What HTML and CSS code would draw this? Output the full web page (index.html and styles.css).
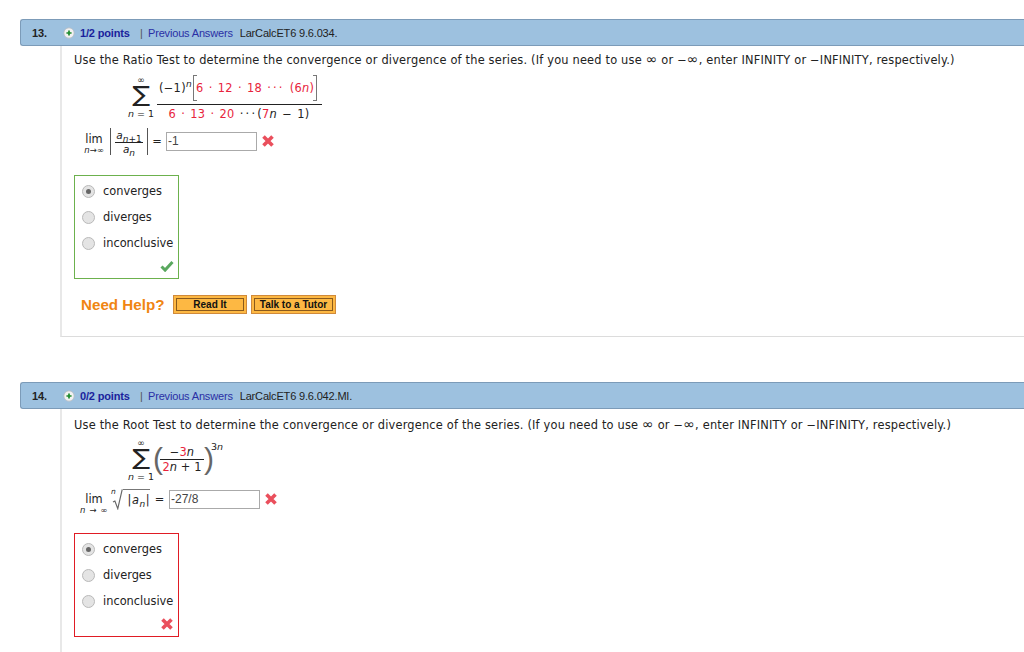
FILE: index.html
```html
<!DOCTYPE html>
<html lang="en">
<head>
<meta charset="utf-8">
<title>Series tests</title>
<link rel="stylesheet" href="styles.css">
</head>
<body>
<section class="question q13">
  <header class="bar">
    <span class="num">13.</span>
    <svg class="plus" viewBox="0 0 14 14"><circle cx="7" cy="7" r="6" fill="#f2f2f2" stroke="#b5bcc4"/><path d="M7 4v6M4 7h6" stroke="#1d8a2c" stroke-width="2"/></svg>
    <b class="pts">1/2 points</b>
    <span class="sep">|</span>
    <span class="prev">Previous Answers</span>
    <span class="code">LarCalcET6 9.6.034.</span>
  </header>
  <div class="content">
    <p class="prompt">Use the Ratio Test to determine the convergence or divergence of the series. (If you need to use <span class="sym">∞</span> or −<span class="sym">∞</span>, enter INFINITY or −INFINITY, respectively.)</p>
    <div class="series s1">
      <div class="sum"><span class="inf">∞</span><span class="sigma">∑</span><span class="idx"><i>n</i> = 1</span></div>
      <div class="frac f1">
        <div class="top"><span class="pow">(−1)<sup><i>n</i></sup></span><span class="brk"><span class="red">6 · 12 · 18 <span class="dots">···</span> (6<i>n</i>)</span></span></div>
        <div class="bot"><span class="red">6 · 13 · 20</span> <span class="dots">···</span>(<span class="red">7</span><i>n</i> − 1)</div>
      </div>
    </div>
    <div class="limit l1">
      <div class="lim"><span>lim</span><small><i>n</i>→∞</small></div>
      <div class="abs"><div class="mini"><span class="over"><i>a</i><sub><i>n</i>+1</sub></span><span class="under"><i>a</i><sub><i>n</i></sub></span></div></div>
      <span class="eq">=</span>
      <input class="answer" value="-1" aria-label="limit">
      <svg class="cross" viewBox="0 0 14 14"><path d="M2.500 2.500l9 9M11.500 2.500l-9 9" stroke="#ea4f5c" stroke-width="3.6"/></svg>
    </div>
    <div class="choices good">
      <label class="opt"><span class="radio on"></span>converges</label>
      <label class="opt"><span class="radio"></span>diverges</label>
      <label class="opt"><span class="radio"></span>inconclusive</label>
      <svg class="mark check" viewBox="0 0 14 11"><path d="M1.500 5.500l3.600 3.600 7.400-8" fill="none" stroke="#5aa85f" stroke-width="3"/></svg>
    </div>
    <div class="help">
      <span class="need">Need Help?</span>
      <span class="btn read"><span>Read It</span></span>
      <span class="btn tutor"><span>Talk to a Tutor</span></span>
    </div>
  </div>
</section>
<section class="question q14">
  <header class="bar">
    <span class="num">14.</span>
    <svg class="plus" viewBox="0 0 14 14"><circle cx="7" cy="7" r="6" fill="#f2f2f2" stroke="#b5bcc4"/><path d="M7 4v6M4 7h6" stroke="#1d8a2c" stroke-width="2"/></svg>
    <b class="pts">0/2 points</b>
    <span class="sep">|</span>
    <span class="prev">Previous Answers</span>
    <span class="code">LarCalcET6 9.6.042.MI.</span>
  </header>
  <div class="content">
    <p class="prompt">Use the Root Test to determine the convergence or divergence of the series. (If you need to use <span class="sym">∞</span> or −<span class="sym">∞</span>, enter INFINITY or −INFINITY, respectively.)</p>
    <div class="series s2">
      <div class="sum"><span class="inf">∞</span><span class="sigma">∑</span><span class="idx"><i>n</i> = 1</span></div>
      <span class="paren">(</span>
      <div class="frac f2">
        <div class="top">−<span class="red">3</span><i>n</i></div>
        <div class="bot"><span class="red">2</span><i>n</i> + 1</div>
      </div>
      <span class="paren">)</span>
      <span class="power">3<i>n</i></span>
    </div>
    <div class="limit l2">
      <div class="lim"><span>lim</span><small><i>n</i> → ∞</small></div>
      <div class="root">
        <span class="rootn"><i>n</i></span>
        <svg class="radical" viewBox="0 0 11 21"><path d="M1 13l2-1 3 8L10.500 .5h.5" fill="none" stroke="#666" stroke-width="1.2"/></svg>
        <span class="radicand">|<i>a</i><sub><i>n</i></sub>|</span>
      </div>
      <span class="eq">=</span>
      <input class="answer" value="-27/8" aria-label="limit">
      <svg class="cross" viewBox="0 0 14 14"><path d="M2.500 2.500l9 9M11.500 2.500l-9 9" stroke="#ea4f5c" stroke-width="3.6"/></svg>
    </div>
    <div class="choices bad">
      <label class="opt"><span class="radio on"></span>converges</label>
      <label class="opt"><span class="radio"></span>diverges</label>
      <label class="opt"><span class="radio"></span>inconclusive</label>
      <svg class="mark" viewBox="0 0 14 14"><path d="M2.500 2.500l9 9M11.500 2.500l-9 9" stroke="#ea4f5c" stroke-width="3.6"/></svg>
    </div>
  </div>
</section>
</body>
</html>
```
FILE: styles.css
```css
* { box-sizing: border-box; }
html, body { margin: 0; padding: 0; background: #fff; overflow: hidden; }
body { height: 652px; padding-top: 19px; font-family: "DejaVu Sans", Verdana, sans-serif; font-size: 11.4px; color: #222; }
.question { margin-left: 20px; }
.q14 { margin-top: 45px; }
.bar { height: 27px; display: flex; align-items: center; background: #9dc1df; border: 1px solid #7c9bb8; border-right: 0; border-radius: 3px 0 0 3px; font-family: "Liberation Sans", Arial, sans-serif; font-size: 11px; letter-spacing: -.17px; color: #222; padding-left: 11px; }
.num { font-weight: bold; width: 31px; }
.plus { width: 12px; height: 12px; margin-right: 5px; }
.pts { color: #1a1f9c; width: 60px; }
.sep { color: #555; width: 8px; }
.prev { color: #2a2fa5; margin-right: 7px; }
.content { margin-left: 40px; border-left: 2px solid #e8e8e8; padding-left: 12px; }
.q13 .content { height: 291px; border-bottom: 1px solid #dcdcdc; }
.q14 .content { height: 244px; }
.prompt { margin: 0; padding-top: 6px; line-height: 16px; white-space: nowrap; letter-spacing: .183px; }
.q14 .prompt { padding-top: 8px; }
.sym { font-size: 14px; line-height: 0; }
i { font-style: italic; }
.red { color: #e8243c; }
.series { display: flex; align-items: flex-start; margin: 3px 0 0 55px; }
.s1 { height: 55px; }
.s2 { height: 48px; }
.sum { width: 24px; display: flex; flex-direction: column; align-items: center; font-size: 9.5px; }
.s1 .sum { padding-top: 5px; }
.s2 .sum { padding-top: 3px; }
.inf { font-size: 9px; line-height: 8px; }
.sigma { font-size: 22px; line-height: 21px; transform: scaleX(1.2); }
.idx { line-height: 11px; margin-top: 3px; white-space: nowrap; }
.frac { display: flex; flex-direction: column; align-items: center; white-space: nowrap; letter-spacing: .3px; }
.f1 { margin-left: 4px; width: 165px; }
.f1 .top { height: 34px; padding: 4px 0 3px 2px; border-bottom: 1px solid #222; width: 100%; display: flex; align-items: center; }
.f1 .bot { line-height: 18px; word-spacing: 1.2px; margin-left: -1px; }
.dots { letter-spacing: 2.2px; }
.pow { width: 34px; }
.brk { position: relative; display: flex; align-items: center; height: 26px; width: 124px; padding-left: 3px; word-spacing: 1.2px; }
.brk::before, .brk::after { content: ""; position: absolute; top: 0; bottom: 0; width: 3px; border: 1px solid #777; }
.brk::before { left: 0; border-right: 0; }
.brk::after { right: 0; border-left: 0; }
sup { font-size: 9px; line-height: 0; }
sub { font-size: 9px; line-height: 0; }
.paren { width: 7px; font-family: "Liberation Sans", Arial, sans-serif; font-size: 30px; line-height: 34px; color: #666; margin-top: 6px; }
.f2 { margin: 9px 0 0; width: 44px; letter-spacing: .1px; }
.f2 .top { line-height: 14px; border-bottom: 1px solid #222; width: 100%; text-align: center; height: 15px; }
.f2 .bot { line-height: 15px; }
.power { font-size: 9.5px; line-height: 12px; margin-top: 5px; }
.limit { display: flex; align-items: center; height: 30px; }
.l1 { margin-left: 7px; }
.l2 { margin-left: 3px; }
.lim { display: flex; flex-direction: column; align-items: center; line-height: 12px; width: 26px; }
.l1 .lim { margin-top: 6px; }
.l2 .lim { width: 34px; margin-top: 9px; }
.l2 .lim small { letter-spacing: .6px; }
.lim small { font-size: 8.5px; white-space: nowrap; line-height: 10px; }
.abs { margin-left: 3px; border: 1px solid #555; border-width: 0 1px; height: 27px; width: 38px; }
.mini { display: flex; flex-direction: column; align-items: center; font-size: 10.5px; padding: 0 4px; }
.over { line-height: 14px; white-space: nowrap; }
.under { border-top: 1px solid #222; width: 100%; text-align: center; line-height: 12px; }
.eq { width: 18px; text-align: center; }
.l2 .eq { width: 19px; }
.answer { width: 91px; font-family: "Liberation Sans", Arial, sans-serif; font-size: 12px; color: #444; border: 1px solid #aaa; height: 19px; padding: 0 0 0 1px; background: #fff; }
.cross { width: 14px; height: 14px; margin-left: 4px; }
.root { display: flex; position: relative; width: 39px; height: 21px; padding-left: 1px; }
.rootn { position: absolute; left: 0; top: -2px; font-size: 7.5px; line-height: 10px; }
.radical { width: 11px; height: 21px; }
.radicand { flex: 1; border-top: 1px solid #777; line-height: 20px; padding-left: 5px; white-space: nowrap; letter-spacing: .5px; }
.choices { position: relative; width: 105px; border: 1px solid; height: 104px; margin-top: 19px; padding-top: 2px; }
.good { border-color: #6cb14d; }
.bad { border-color: #e01b24; }
.opt { display: flex; align-items: center; height: 26px; padding-left: 7px; }
.radio { width: 13px; height: 13px; border-radius: 50%; border: 1px solid #b9b9b9; background: #e4e4e4; margin-right: 8px; display: flex; align-items: center; justify-content: center; }
.radio.on::after { content: ""; width: 5px; height: 5px; border-radius: 50%; background: #666; }
.mark { position: absolute; right: 4px; bottom: 5px; width: 14px; height: 14px; }
.check { height: 11px; bottom: 6px; }
.help { display: flex; align-items: center; margin: 15px 0 0 7px; height: 20px; }
.need { font-family: "Liberation Sans", Arial, sans-serif; font-weight: bold; font-size: 15.2px; color: #f08512; margin-right: 9px; width: 83px; white-space: nowrap; }
.btn { display: flex; height: 19px; padding: 2px; background: #fdb843; border: 1px solid #d08a3a; font-family: "Liberation Sans", Arial, sans-serif; font-weight: bold; font-size: 10px; color: #111; }
.btn span { flex: 1; display: flex; align-items: center; justify-content: center; border: 1px solid #8a5a1c; }
.read { width: 74px; margin-right: 4px; }
.tutor { width: 85px; }
```
